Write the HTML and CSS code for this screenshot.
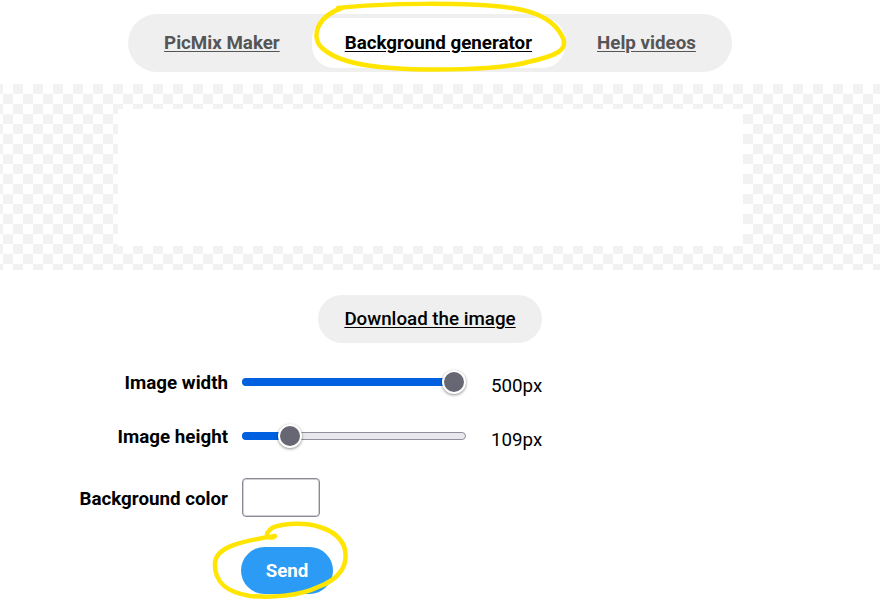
FILE: index.html
```html
<!DOCTYPE html>
<html lang="en">
<head>
<meta charset="utf-8">
<title>Background generator</title>
<link rel="stylesheet" href="styles.css">
</head>
<body>
<div class="page">
  <nav class="nav-wrap">
    <div class="nav">
      <a class="tab" href="#">PicMix Maker</a>
      <a class="tab active" href="#">Background generator</a>
      <a class="tab" href="#">Help videos</a>
    </div>
  </nav>

  <section class="canvas">
    <div class="preview"></div>
  </section>

  <div class="download-wrap">
    <a class="download" href="#">Download the image</a>
  </div>

  <form class="form">
    <label class="label">Image width</label>
    <div class="slider">
      <div class="track"><div class="fill" style="width: 212px"></div></div>
      <div class="thumb" style="left: 200px"></div>
    </div>
    <span class="value">500px</span>

    <label class="label">Image height</label>
    <div class="slider">
      <div class="track"><div class="fill" style="width: 48px"></div></div>
      <div class="thumb" style="left: 36px"></div>
    </div>
    <span class="value">109px</span>

    <label class="label">Background color</label>
    <div class="color-box"></div>
    <span></span>

    <span></span>
    <div class="send-cell"><button type="button" class="send">Send</button></div>
    <span></span>
  </form>

  <svg class="mark mark-nav" width="880" height="612" viewBox="0 0 880 612">
    <path d="M338 8 C 380 3, 470 2, 512 8 C 540 12, 556 22, 563 38 C 568 50, 556 56, 528 62 C 500 70, 430 71, 392 68 C 360 66, 335 60, 322 48 C 310 36, 318 16, 342 8" />
  </svg>
  <svg class="mark mark-send" width="880" height="612" viewBox="0 0 880 612">
    <path d="M274 537 C 262 540, 266 527, 282 525 C 310 521, 336 528, 344 546 C 350 566, 338 580, 318 587 C 300 596, 270 598, 250 596 C 226 592, 214 582, 215 563 C 216 548, 236 542, 275 536" />
  </svg>
</div>
</body>
</html>
```

FILE: styles.css
```css
* { box-sizing: border-box; }

html, body {
  margin: 0;
  padding: 0;
  background: #ffffff;
}

body {
  font-family: Roboto, "Liberation Sans", Arial, sans-serif;
  font-size: 18.75px;
  color: #000;
}

.page {
  position: relative;
  width: 880px;
  height: 612px;
  overflow: hidden;
}

.nav-wrap {
  display: flex;
  justify-content: center;
  padding: 14px 20px 0 0;
}

.nav {
  display: flex;
  background: #efefef;
  border-radius: 29px;
  padding: 4px;
  height: 58px;
}

.tab {
  display: flex;
  align-items: center;
  height: 50px;
  padding: 0 32.5px 1px;
  font-size: 18.75px;
  font-weight: 700;
  color: #555;
  text-decoration: underline;
  text-underline-offset: 2px;
  border-radius: 22px;
}

.tab.active {
  background: #fff;
  color: #000;
}

.canvas {
  margin-top: 12px;
  height: 186px;
  display: flex;
  justify-content: center;
  align-items: center;
  padding-right: 20px;
  background-color: #fff;
  background-image: conic-gradient(#f2f2f2 25%, #fff 0 50%, #f2f2f2 0 75%, #fff 0);
  background-size: 20px 20px;
  background-position: 3px 0;
}

.preview {
  width: 625px;
  height: 137px;
  background: #fff;
  margin-left: 1px;
}

.download-wrap {
  display: flex;
  justify-content: center;
  padding-right: 20px;
  margin-top: 25px;
}

.download {
  display: flex;
  align-items: center;
  height: 48px;
  padding: 0 26px;
  background: #efefef;
  border-radius: 24px;
  font-size: 18.75px;
  font-weight: 500;
  color: #000;
  text-decoration: underline;
  text-underline-offset: 2px;
}

.form {
  display: grid;
  grid-template-columns: 228px 224px auto;
  grid-template-rows: 24px 24px 39px 47px;
  column-gap: 14px;
  row-gap: 30px;
  margin-top: 27px;
  align-items: center;
}

.label {
  text-align: right;
  font-size: 18.75px;
  font-weight: 700;
  padding-top: 2px;
}

.value {
  font-size: 18.75px;
  padding-left: 11px;
  padding-top: 8px;
}

.slider {
  position: relative;
  width: 224px;
  height: 24px;
  display: flex;
  align-items: center;
}

.track {
  position: relative;
  width: 100%;
  height: 8px;
  background: #e9e9ed;
  border: 1px solid #8f8f9d;
  border-radius: 4px;
}

.fill {
  position: absolute;
  left: -1px;
  top: -1px;
  bottom: -1px;
  background: #0060df;
  border-radius: 4px;
}

.thumb {
  position: absolute;
  top: 0;
  width: 24px;
  height: 24px;
  border-radius: 50%;
  background: #676774;
  border: 2px solid #fff;
  box-shadow: 0 1px 3px rgba(0, 0, 0, 0.45);
}

.color-box {
  width: 78px;
  height: 39px;
  border: 1px solid #8a8a94;
  box-shadow: inset 0 0 0 1px #cfcfd4;
  border-radius: 4px;
  background: #fff;
}

.send-cell {
  display: flex;
}

.send {
  width: 92px;
  height: 47px;
  margin-left: -1px;
  border: none;
  border-radius: 24px;
  background: #2b9bf5;
  color: #fff;
  font-family: Roboto, "Liberation Sans", Arial, sans-serif;
  font-size: 18.75px;
  font-weight: 700;
}

.mark {
  position: absolute;
  left: 0;
  top: 0;
  pointer-events: none;
}

.mark path {
  fill: none;
  stroke: #ffe500;
  stroke-width: 4.5;
  stroke-linecap: round;
  stroke-linejoin: round;
}
```
